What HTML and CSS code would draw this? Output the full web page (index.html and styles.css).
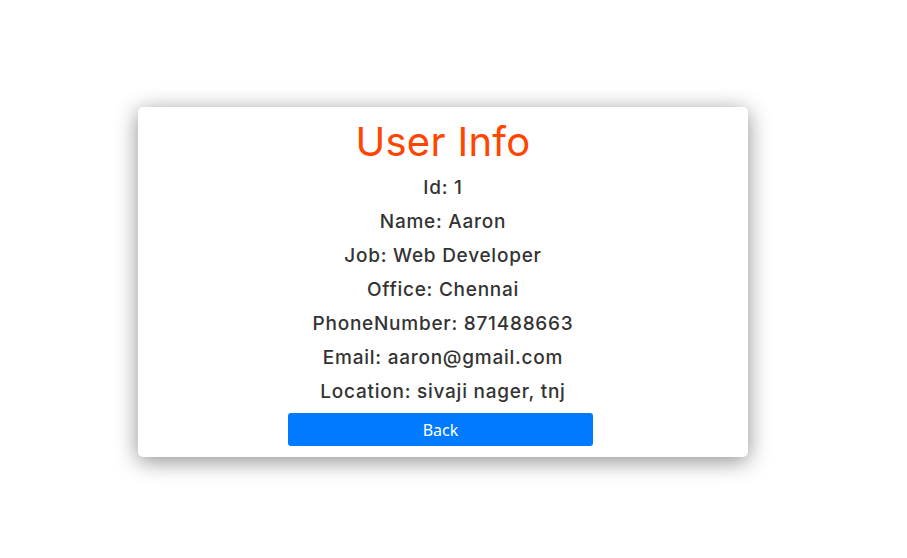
FILE: index.html
```html
<!DOCTYPE html>
<html>
<head>
<meta charset="utf-8">
<link rel="stylesheet" href="styles.css">
</head>
<body>
<div class="page">
  <div class="card">
    <h1 class="title">User Info</h1>
    <div class="info">
      <p class="row">Id: 1</p>
      <p class="row">Name: Aaron</p>
      <p class="row">Job: Web Developer</p>
      <p class="row">Office: Chennai</p>
      <p class="row">PhoneNumber: 871488663</p>
      <p class="row">Email: aaron@gmail.com</p>
      <p class="row">Location: sivaji nager, tnj</p>
    </div>
    <button class="back">Back</button>
  </div>
</div>
</body>
</html>
```
FILE: styles.css
```css
html, body {
  margin: 0;
  padding: 0;
  background: #ffffff;
}
.page {
  width: 907px;
  height: 558px;
  padding: 107px 0 0 138px;
  box-sizing: border-box;
}
.card {
  width: 610px;
  height: 350px;
  box-sizing: border-box;
  background: #fff;
  border-radius: 5px;
  box-shadow: 0 4px 22px rgba(0, 0, 0, 0.45);
  display: flex;
  flex-direction: column;
  align-items: center;
  padding-top: 7px;
  font-family: "Inter", "Open Sans", sans-serif;
}
.title {
  margin: 0;
  height: 56px;
  line-height: 56px;
  font-size: 40px;
  font-weight: 400;
  letter-spacing: 0.3px;
  color: #ff4500;
}
.info {
  display: flex;
  flex-direction: column;
  align-items: center;
  margin-top: 1px;
}
.row {
  margin: 0;
  height: 34px;
  line-height: 34px;
  font-size: 19px;
  font-weight: 500;
  letter-spacing: 0.75px;
  color: #333333;
}
.back {
  align-self: flex-start;
  margin: 4px 0 0 150px;
  width: 305px;
  height: 33px;
  border: none;
  border-radius: 3px;
  background: #007bff;
  color: #fff;
  font-family: "Noto Sans", "Open Sans", sans-serif;
  font-size: 16px;
  padding: 0;
}
```
